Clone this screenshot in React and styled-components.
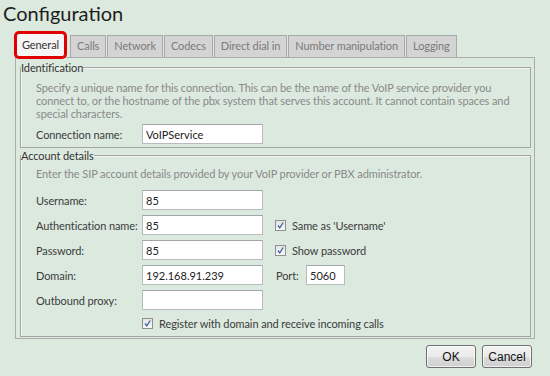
import styled, { createGlobalStyle } from "styled-components";

const GlobalStyle = createGlobalStyle`
  html, body {
    margin: 0;
    padding: 0;
    background: #dbe9df;
  }
  body {
    font-family: Lato, "Open Sans", sans-serif;
    font-size: 11px;
    letter-spacing: -0.1px;
    color: #333;
  }
`;

const Page = styled.div`
  width: 550px;
  height: 376px;
  overflow: hidden;
`;

const Title = styled.h1`
  margin: 0;
  height: 35px;
  padding-left: 3px;
  font-size: 20px;
  line-height: 27px;
  font-weight: 400;
  letter-spacing: 0;
  color: #1e1e1e;
  box-sizing: border-box;
`;

const Tabs = styled.div`
  display: flex;
  align-items: flex-end;
  gap: 1px;
  height: 22px;
  padding-left: 16px;
`;

const Tab = styled.div`
  height: ${({ $active }) => ($active ? "24px" : "22px")};
  box-sizing: border-box;
  padding: ${({ $active }) => ($active ? "0 5px" : "0 6px")};
  margin-right: ${({ $active }) => ($active ? "4px" : "0")};
  border: 1px solid ${({ $active }) => ($active ? "#e00000" : "#a9a9a9")};
  border-bottom: ${({ $active }) => ($active ? "1px solid #e00000" : "none")};
  border-radius: ${({ $active }) => ($active ? "3px" : "0")};
  box-shadow: ${({ $active }) => ($active ? "0 0 0 2px #e00000" : "none")};
  background: ${({ $active }) => ($active ? "#f5f5f5" : "#d4d4d4")};
  color: ${({ $active }) => ($active ? "#333" : "#7a7a7a")};
  line-height: ${({ $active }) => ($active ? "21px" : "20px")};
  white-space: nowrap;
  position: relative;
  z-index: ${({ $active }) => ($active ? 1 : 0)};
`;

const Panel = styled.div`
  margin-left: 15px;
  width: 520px;
  box-sizing: border-box;
  border: 1px solid #acacac;
  padding: 2px 3px 1px 4px;
`;

const Group = styled.fieldset`
  margin: 0;
  padding: 0;
  border: 1px solid #a4a4a4;
  box-shadow: inset 1px 1px 0 rgba(255, 255, 255, 0.6);
  min-width: 0;
`;

const Legend = styled.legend`
  padding: 0;
  margin: 0;
  line-height: 15px;
  color: #333;
`;

const Body = styled.div`
  padding: ${({ $pad }) => $pad};
`;

const Desc = styled.p`
  margin: 0;
  line-height: 13px;
  color: #8a8a8a;
  white-space: nowrap;
`;

const Rows = styled.div`
  display: flex;
  flex-direction: column;
  gap: 5px;
  margin-top: ${({ $top }) => $top};
`;

const Row = styled.div`
  display: flex;
  align-items: center;
  height: ${({ $h }) => $h || "20px"};
  white-space: nowrap;
`;

const Label = styled.label`
  width: 106px;
  flex-shrink: 0;
  color: #3c3c3c;
`;

const Input = styled.input`
  width: ${({ $w }) => $w || "121px"};
  height: 20px;
  box-sizing: border-box;
  margin: 0;
  padding: 0 3px;
  border: 1px solid #b8bbc0;
  border-top-color: #a3a6ab;
  background: #fff;
  font-family: Lato, "Open Sans", sans-serif;
  font-size: 11px;
  color: #222;
  outline: none;
`;

const Check = styled.label`
  display: flex;
  align-items: center;
  gap: 6px;
  margin-left: ${({ $left }) => $left};
  color: #3c3c3c;
`;

const Box = styled.span`
  width: 11px;
  height: 11px;
  box-sizing: border-box;
  border: 1px solid #8f8f8f;
  background: linear-gradient(#e4e4e4, #f8f8f8);
  display: grid;
  place-items: center;
`;

const PortLabel = styled.span`
  margin-left: 13px;
  width: 30px;
  color: #3c3c3c;
`;

const Buttons = styled.div`
  display: flex;
  justify-content: flex-end;
  gap: 6px;
  padding-right: 18px;
  margin-top: 6px;
`;

const Button = styled.button`
  width: 50px;
  height: 23px;
  margin: 0;
  padding: 0;
  border: 1px solid #707070;
  border-radius: 3px;
  background: linear-gradient(#f2f2f2 0%, #ebebeb 50%, #dddddd 51%, #cfcfcf 100%);
  box-shadow: inset 0 0 0 1px rgba(255, 255, 255, 0.7);
  font-family: "Liberation Sans", Arial, sans-serif;
  font-size: 12px;
  color: #111;
`;

const Checkbox = ({ children, left }) => (
  <Check $left={left}>
    <Box>
      <svg width="9" height="9" viewBox="0 0 9 9">
        <path d="M2 4.5 L3.8 6.8 L7.2 1.5" fill="none" stroke="#3f5fa8" strokeWidth="1.3" />
      </svg>
    </Box>
    {children}
  </Check>
);

const tabs = ["General", "Calls", "Network", "Codecs", "Direct dial in", "Number manipulation", "Logging"];

export default function App() {
  return (
    <Page>
      <GlobalStyle />
      <Title>Configuration</Title>
      <Tabs>
        {tabs.map((t, i) => (
          <Tab key={t} $active={i === 0}>
            {t}
          </Tab>
        ))}
      </Tabs>
      <Panel>
        <Group>
          <Legend>Identification</Legend>
          <Body $pad="6px 0 3px 15px">
            <Desc>
              Specify a unique name for this connection. This can be the name of the VoIP service provider you
              <br />
              connect to, or the hostname of the pbx system that serves this account. It cannot contain spaces and
              <br />
              special characters.
            </Desc>
            <Rows $top="4px">
              <Row>
                <Label>Connection name:</Label>
                <Input defaultValue="VoIPService" />
              </Row>
            </Rows>
          </Body>
        </Group>
        <Group>
          <Legend>Account details</Legend>
          <Body $pad="4px 0 5px 15px">
            <Desc>Enter the SIP account details provided by your VoIP provider or PBX administrator.</Desc>
            <Rows $top="10px">
              <Row>
                <Label>Username:</Label>
                <Input defaultValue="85" />
              </Row>
              <Row>
                <Label>Authentication name:</Label>
                <Input defaultValue="85" />
                <Checkbox left="12px">Same as 'Username'</Checkbox>
              </Row>
              <Row>
                <Label>Password:</Label>
                <Input defaultValue="85" />
                <Checkbox left="12px">Show password</Checkbox>
              </Row>
              <Row>
                <Label>Domain:</Label>
                <Input defaultValue="192.168.91.239" />
                <PortLabel>Port:</PortLabel>
                <Input $w="39px" defaultValue="5060" />
              </Row>
              <Row>
                <Label>Outbound proxy:</Label>
                <Input defaultValue="" />
              </Row>
              <Row $h="16px">
                <Checkbox left="106px">Register with domain and receive incoming calls</Checkbox>
              </Row>
            </Rows>
          </Body>
        </Group>
      </Panel>
      <Buttons>
        <Button>OK</Button>
        <Button>Cancel</Button>
      </Buttons>
    </Page>
  );
}
